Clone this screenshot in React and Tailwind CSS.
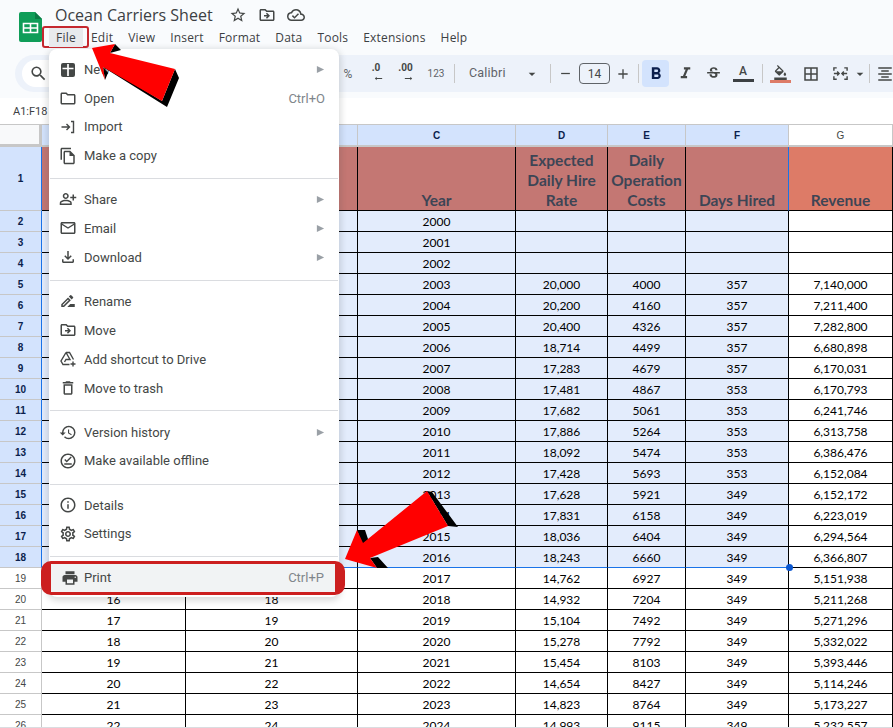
import {
  MdOutlineFolder, MdOutlineFileCopy, MdOutlinePersonAddAlt, MdMailOutline, MdOutlineFileDownload,
  MdOutlineDriveFileRenameOutline, MdOutlineDriveFileMove, MdOutlineDelete,
  MdHistory, MdOutlineOfflinePin, MdInfoOutline, MdOutlineSettings, MdPrint, MdSearch, MdStarBorder,
  MdOutlineCloudDone, MdFormatBold, MdFormatItalic, MdStrikethroughS, MdFormatColorFill, MdBorderAll,
  MdFormatAlignCenter, MdAdd, MdRemove, MdArrowDropDown, MdArrowRightAlt,
} from "react-icons/md";

const NewIcon = () => (
  <svg viewBox="0 0 18 18" className="w-[18px] h-[18px]">
    <rect x="2" y="2" width="14" height="14" rx="2" fill="#444746" />
    <path d="M9 3v12M3.5 7.5h11" stroke="#fff" strokeWidth="1.7" />
  </svg>
);

const ImportIcon = () => (
  <svg viewBox="0 0 18 18" className="w-[18px] h-[18px]" fill="none" stroke="#444746" strokeWidth="1.4">
    <path d="M2.5 9h7.5M7.5 6l3 3-3 3M12 3.5h2.5v11H12" />
  </svg>
);

const ShortcutIcon = () => (
  <svg viewBox="0 0 18 18" className="w-[18px] h-[18px]" fill="none" stroke="#444746" strokeWidth="1.4">
    <path d="M7 2.5h3.5l4 7M7 2.5L2 11l2 3.5h6.5M7 2.5l4 7H7l-1.5 2.5" />
    <path d="M14 11.5v5M11.5 14h5" />
  </svg>
);

const menuGroups = [
  {
    h: "h-[28.6px]",
    sep: "mt-[8px] mb-[6px]",
    items: [
      { icon: <NewIcon />, label: "New", arrow: true },
      { icon: <MdOutlineFolder size={19} />, label: "Open", shortcut: "Ctrl+O" },
      { icon: <ImportIcon />, label: "Import" },
      { icon: <MdOutlineFileCopy size={18} />, label: "Make a copy" },
    ],
  },
  {
    h: "h-[29px]",
    sep: "mt-[8px] mb-[6px]",
    items: [
      { icon: <MdOutlinePersonAddAlt size={18} />, label: "Share", arrow: true },
      { icon: <MdMailOutline size={18} />, label: "Email", arrow: true },
      { icon: <MdOutlineFileDownload size={18} />, label: "Download", arrow: true },
    ],
  },
  {
    h: "h-[29px]",
    sep: "mt-[7px] mb-[8px]",
    items: [
      { icon: <MdOutlineDriveFileRenameOutline size={18} />, label: "Rename" },
      { icon: <MdOutlineDriveFileMove size={18} />, label: "Move" },
      { icon: <ShortcutIcon />, label: "Add shortcut to Drive" },
      { icon: <MdOutlineDelete size={18} />, label: "Move to trash" },
    ],
  },
  {
    h: "h-[28.2px]",
    sep: "mt-[8.8px] mb-[6px]",
    items: [
      { icon: <MdHistory size={19} />, label: "Version history", arrow: true },
      { icon: <MdOutlineOfflinePin size={18} />, label: "Make available offline" },
    ],
  },
  {
    h: "h-[28.6px]",
    sep: "mt-[8px] mb-[4px]",
    items: [
      { icon: <MdInfoOutline size={18} />, label: "Details" },
      { icon: <MdOutlineSettings size={18} />, label: "Settings" },
    ],
  },
];

// row 5 to 26: D, E, F, G
const data = [
  ["20,000", "4000", "357", "7,140,000"],
  ["20,200", "4160", "357", "7,211,400"],
  ["20,400", "4326", "357", "7,282,800"],
  ["18,714", "4499", "357", "6,680,898"],
  ["17,283", "4679", "357", "6,170,031"],
  ["17,481", "4867", "353", "6,170,793"],
  ["17,682", "5061", "353", "6,241,746"],
  ["17,886", "5264", "353", "6,313,758"],
  ["18,092", "5474", "353", "6,386,476"],
  ["17,428", "5693", "353", "6,152,084"],
  ["17,628", "5921", "349", "6,152,172"],
  ["17,831", "6158", "349", "6,223,019"],
  ["18,036", "6404", "349", "6,294,564"],
  ["18,243", "6660", "349", "6,366,807"],
  ["14,762", "6927", "349", "5,151,938"],
  ["14,932", "7204", "349", "5,211,268"],
  ["15,104", "7492", "349", "5,271,296"],
  ["15,278", "7792", "349", "5,332,022"],
  ["15,454", "8103", "349", "5,393,446"],
  ["14,654", "8427", "349", "5,114,246"],
  ["14,823", "8764", "349", "5,173,227"],
  ["14,993", "9115", "349", "5,232,557"],
];

// columns A and B only show from row 20 down, the menu covers the rest
const rows = [];
for (let n = 2; n <= 26; n++) {
  const d = n >= 5 ? data[n - 5] : ["", "", "", ""];
  rows.push({ n, a: n >= 20 ? n - 4 : "", b: n >= 20 ? n - 2 : "", year: 1998 + n, d });
}

const gridCols = "grid grid-cols-[42px_144px_172px_158px_92px_78px_103px_104px_1px]";

function Arrowhead() {
  return (
    <svg viewBox="0 0 10 10" className="w-[9px] h-[9px]">
      <path d="M1 1l8 4-8 4z" fill="#9aa0a6" />
    </svg>
  );
}

function Slot({ w, children }) {
  return <div className={`${w} flex justify-center items-center text-[#444746]`}>{children}</div>;
}

function Sep({ ml }) {
  return <div className={`${ml} w-px h-[19px] bg-[#c7c7c7]`} />;
}

function Toolbar() {
  return (
    <div className="h-[37px] ml-[15px] pl-[7px] bg-[#edf2fa] rounded-l-full flex items-center [&>*]:shrink-0 font-['Roboto',sans-serif] text-[#5f6368]">
      <div className="w-[28px] h-[27px] bg-white rounded-l-full flex items-center justify-end pr-[2px] text-[#444746]">
        <MdSearch size={19} />
      </div>
      <div className="w-[284px]" />
      <Slot w="w-[28px]"><span className="text-[12px] text-[#5f6368]">%</span></Slot>
      <Slot w="w-[28px]">
        <div className="flex flex-col items-center leading-none">
          <span className="text-[10px] font-bold h-[10px] leading-[10px]">.0</span>
          <MdArrowRightAlt size={11} className="rotate-180 ml-[4px]" />
        </div>
      </Slot>
      <Slot w="w-[31px]">
        <div className="flex flex-col items-center leading-none">
          <span className="text-[10px] font-bold h-[10px] leading-[10px]">.00</span>
          <MdArrowRightAlt size={11} className="ml-[6px]" />
        </div>
      </Slot>
      <Slot w="w-[30px]"><span className="text-[10px] text-[#5f6368]">123</span></Slot>
      <Sep ml="ml-[3px]" />
      <div className="ml-[14px] w-[55px] text-[12.5px] tracking-[0.2px] text-[#5f6368]">Calibri</div>
      <Slot w="w-[16px]"><MdArrowDropDown size={18} /></Slot>
      <div className="w-[10px]" />
      <Sep />
      <Slot w="w-[28px]"><MdRemove size={15} /></Slot>
      <div className="w-[31px] h-[21px] border border-[#5f6368] rounded-[4px] flex items-center justify-center text-[12px] text-[#444746]">14</div>
      <Slot w="w-[26px]"><MdAdd size={16} /></Slot>
      <Sep ml="ml-[2px]" />
      <div className="ml-[3px] w-[27px] h-[27px] bg-[#d3e3fd] rounded-[4px] flex items-center justify-center text-[#0b1f4d]">
        <MdFormatBold size={20} />
      </div>
      <Slot w="w-[32px]"><MdFormatItalic size={19} /></Slot>
      <Slot w="w-[24px]"><MdStrikethroughS size={17} /></Slot>
      <Slot w="w-[36px]">
        <div className="flex flex-col items-center w-[21px]">
          <span className="text-[12px] leading-[13px] font-medium">A</span>
          <div className="w-[21px] h-[3px] mt-[1px] bg-[#3c4043]" />
        </div>
      </Slot>
      <Sep ml="ml-[1px]" />
      <Slot w="w-[34px]">
        <div className="flex flex-col items-center w-[21px]">
          <MdFormatColorFill size={15} />
          <div className="w-[21px] h-[3px] bg-[#dd7b67]" />
        </div>
      </Slot>
      <Slot w="w-[28px]"><MdBorderAll size={18} /></Slot>
      <Slot w="w-[30px]">
        <svg viewBox="0 0 18 18" className="w-[17px] h-[17px]" fill="none" stroke="#444746" strokeWidth="1.5">
          <path d="M5 3H2v3M13 3h3v3M5 15H2v-3M13 15h3v-3M2 9h5M5.5 7l2 2-2 2M16 9h-5M12.5 7l-2 2 2 2" />
        </svg>
      </Slot>
      <Slot w="w-[10px]"><MdArrowDropDown size={16} className="shrink-0" /></Slot>
      <Sep ml="ml-[4px]" />
      <Slot w="w-[30px]"><MdFormatAlignCenter size={18} className="shrink-0" /></Slot>
    </div>
  );
}

function Header() {
  const menus = ["File", "Edit", "View", "Insert", "Format", "Data", "Tools", "Extensions", "Help"];
  return (
    <div className="h-[98px] bg-[#f9fbfd]">
      <div className="h-[55px] flex">
        <svg viewBox="0 0 23 30" className="w-[23px] h-[30px] ml-[19px] mt-[12px] shrink-0">
          <path d="M2 0h14l7 7v21a2 2 0 0 1-2 2H2a2 2 0 0 1-2-2V2a2 2 0 0 1 2-2z" fill="#0f9d58" />
          <path d="M16 0l7 7h-7z" fill="#0b7a45" />
          <path d="M4.5 11.5h14v9h-14z" fill="none" stroke="#fff" strokeWidth="1.6" />
          <path d="M4.5 16h14M11.5 11.5v9" stroke="#fff" strokeWidth="1.6" />
        </svg>
        <div className="ml-[13px] flex flex-col">
          <div className="h-[26px] pt-[4px] flex items-center">
            <span className="text-[16px] leading-[24px] text-[#3c4043] font-['Open_Sans',sans-serif]">Ocean Carriers Sheet</span>
            <div className="ml-[16px] flex gap-[11px] text-[#444746]">
              <MdStarBorder size={18} />
              <MdOutlineDriveFileMove size={18} />
              <MdOutlineCloudDone size={18} />
            </div>
          </div>
          <div className="flex gap-[15px] mt-[2px] ml-[2px] h-[20px] items-center text-[12px] text-[#3c4043] tracking-[0.2px] font-['Open_Sans',sans-serif]">
            {menus.slice(1).map((m, i) => (
              <span key={m} className={i === 0 ? "ml-[34px]" : ""}>{m}</span>
            ))}
          </div>
        </div>
      </div>
      <Toolbar />
    </div>
  );
}

function ColHead({ label, sel }) {
  return (
    <div className={`h-[23px] border-t border-b-2 border-r border-t-[#c7c7c7] border-b-[#c7c7c7] border-r-[#c7c7c7] flex items-center justify-center text-[10px] ${sel ? "bg-[#d3e3fd] text-[#0b1f4d] font-semibold" : "bg-white text-[#444746]"}`}>
      {label}
    </div>
  );
}

function Sheet() {
  return (
    <div className={`${gridCols} font-['Liberation_Sans',sans-serif]`}>
      <div className="h-[23px] bg-[#f8f9fa] border-t border-[#c7c7c7] border-r-[3px] border-b-[3px]" />
      <ColHead sel />
      <ColHead sel />
      {["C", "D", "E", "F"].map((c) => (
        <ColHead key={c} label={c} sel />
      ))}
      <ColHead label="G" />
      <div />

      <div className="h-[64px] bg-[#d3e3fd] border-r border-r-[#1a73e8] border-b border-b-[#c7c7c7] flex items-center justify-center text-[10px] font-semibold text-[#0b1f4d]">1</div>
      <HeadCell />
      <HeadCell />
      <HeadCell>Year</HeadCell>
      <HeadCell>Expected<br />Daily Hire<br />Rate</HeadCell>
      <HeadCell>Daily<br />Operation<br />Costs</HeadCell>
      <HeadCell last>Days Hired</HeadCell>
      <div className="h-[64px] bg-[#dd7b67] border-r border-b border-black flex items-end justify-center text-center font-['Lato',sans-serif] font-bold text-[15.5px] leading-[20px] text-[#3d4555]">Revenue</div>
      <div />

      {rows.map((r) => {
        const sel = r.n <= 18;
        const bg = sel ? "bg-[#e3ecfc]" : "bg-white";
        const bottom = r.n === 18 ? "border-b-[#1a73e8]" : "border-b-black";
        const cell = `h-[21px] ${bg} border-r border-r-black border-b ${bottom} flex items-center justify-center pt-[2px] font-['Lato',sans-serif] text-[12px] text-black overflow-hidden`;
        return (
          <div key={r.n} className="contents">
            <div className={`h-[21px] border-b border-b-[#c7c7c7] flex items-center justify-center text-[10px] ${sel ? "bg-[#d3e3fd] border-r border-r-[#1a73e8] font-semibold text-[#0b1f4d]" : "bg-white border-r border-r-[#c7c7c7] text-[#444746]"}`}>
              {r.n}
            </div>
            <div className={cell}>{r.a}</div>
            <div className={cell}>{r.b}</div>
            <div className={cell}>{r.year}</div>
            <div className={cell}>{r.d[0]}</div>
            <div className={cell}>{r.d[1]}</div>
            <div className={`${cell} ${sel ? "border-r-[#1a73e8]" : ""}`}>{r.d[2]}</div>
            <div className="h-[21px] bg-white border-r border-r-black border-b border-b-black flex items-center justify-center pt-[2px] font-['Lato',sans-serif] text-[12px] text-black overflow-hidden">{r.d[3]}</div>
            <div />
          </div>
        );
      })}
    </div>
  );
}

function HeadCell({ children, last }) {
  return (
    <div className={`h-[64px] bg-[#c47773] border-r border-b border-b-black flex items-end justify-center text-center font-['Lato',sans-serif] font-bold text-[15.5px] leading-[20px] text-[#3d4555] ${last ? "border-r-[#1a73e8]" : "border-r-black"}`}>
      <div>{children}</div>
    </div>
  );
}

function FileMenu() {
  return (
    <div className="absolute left-[49px] top-[49px] w-[290px] h-[548px] pt-[6.5px] bg-white rounded-lg shadow-[0_2px_6px_2px_rgba(60,64,67,0.18)] font-['Roboto',sans-serif] text-[13px] text-[#444746]">
      {menuGroups.map((g, i) => (
        <div key={i}>
          {g.items.map((it) => (
            <div key={it.label} className={`${g.h} flex items-center pl-[10px] pr-[14px]`}>
              <div className="w-[18px] flex justify-center text-[#444746]">{it.icon}</div>
              <span className="ml-[7px]">{it.label}</span>
              {it.shortcut && <span className="ml-auto text-[#80868b]">{it.shortcut}</span>}
              {it.arrow && <span className="ml-auto"><Arrowhead /></span>}
            </div>
          ))}
          <div className={`${g.sep} mx-px h-px bg-[#dadce0]`} />
        </div>
      ))}
      <div className="-ml-[8px] -mr-[6px] h-[34px] border-x-[10px] border-y-[3px] border-[#cc1f1f] rounded-[10px] bg-[#f1f3f4] flex items-center pl-[10px] pr-[11px]">
        <MdPrint size={18} className="text-[#444746]" />
        <span className="ml-[5px]">Print</span>
        <span className="ml-auto text-[#80868b]">Ctrl+P</span>
      </div>
    </div>
  );
}

function Annotations() {
  return (
    <>
      <div className="absolute left-[42px] top-[26px] w-[47px] h-[22px] border-2 border-[#c5282f] rounded-[3px]" />
      <div className="absolute left-[49px] top-[28px] w-[34px] h-[19px] bg-[#e8eaed] flex items-center justify-center text-[12px] text-[#3c4043] tracking-[0.2px] font-['Open_Sans',sans-serif]">File</div>
      <svg viewBox="0 0 893 728" className="absolute left-0 top-0 w-[893px] h-[728px] pointer-events-none">
        <path d="M115 44L121 50L110 53ZM175 69L179 78L167 107L162 101ZM103 67L108 68L162 101L167 107ZM103 67L108 73L105 80Z" fill="#000" />
        <path d="M92 48L115 44L110 53L175 69L162 101L103 67L105 80Z" fill="#f00" />
        <path d="M357 530L365 530L369 542L362 544ZM427 491L432 492L458 527L448 526ZM378 557L388 568L377 568L370 558Z" fill="#000" />
        <path d="M345 559L357 530L363 543L427 491L448 526L370 558L377 568Z" fill="#f00" />
      </svg>
      <div className="absolute left-[786px] top-[564px] w-[7px] h-[7px] rounded-full bg-[#0b57d0]" />
    </>
  );
}

export default function App() {
  return (
    <div className="relative w-[893px] h-[728px] overflow-hidden bg-white">
      <Header />
      <div className="h-[26px] bg-white pl-[13px] flex items-center pt-[2px] text-[11px] text-[#3c4043] font-['Roboto',sans-serif]">A1:F18</div>
      <Sheet />
      <div className="absolute left-0 right-0 bottom-0 h-px bg-[#dadce0]" />
      <FileMenu />
      <Annotations />
    </div>
  );
}
